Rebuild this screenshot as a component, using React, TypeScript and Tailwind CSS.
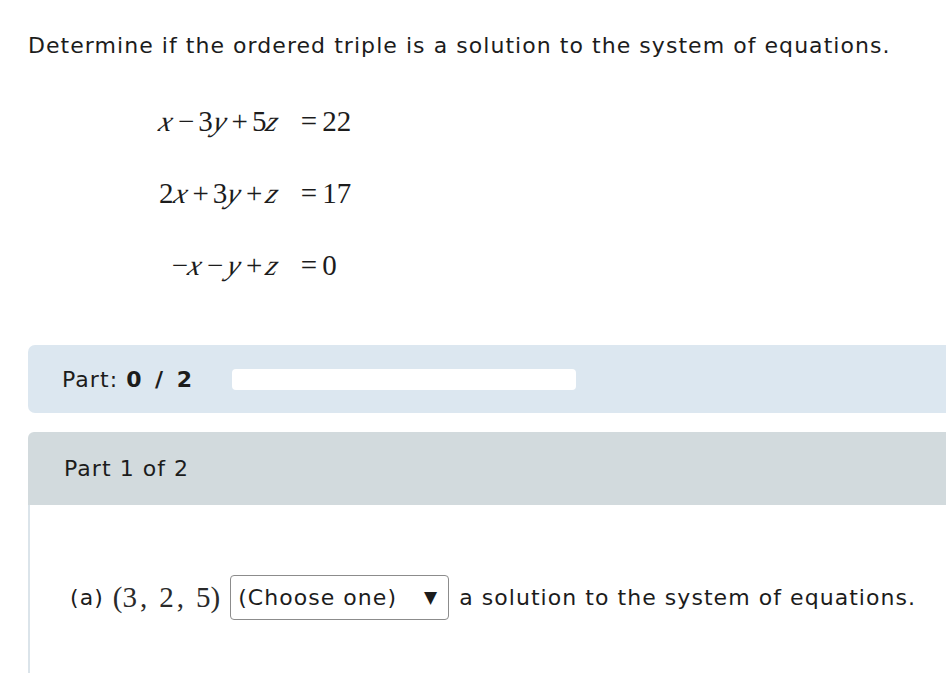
const sans = { fontFamily: '"DejaVu Sans", Verdana, sans-serif' };
const serif = { fontFamily: '"Liberation Serif", "Times New Roman", serif' };

function MathLine({ left, right }: { left: React.ReactNode; right: string }) {
  return (
    <>
      <div className="text-right whitespace-nowrap">{left}</div>
      <div className="whitespace-nowrap pl-[21px]">
        =<span className="ml-[5px]">{right}</span>
      </div>
    </>
  );
}

function V({ children }: { children: React.ReactNode }) {
  return <span className="inline-block -skew-x-[14deg] italic px-[1px]">{children}</span>;
}

function Op({ children }: { children: React.ReactNode }) {
  return <span className="px-[4px]">{children}</span>;
}

export default function App() {
  return (
    <div
      className="h-[673px] w-[946px] overflow-hidden bg-white text-[#1c1c1c] tracking-[1.05px]"
      style={sans}
    >
      <div className="pl-[28px] pt-[32px]">
        <p className="text-[22px] leading-[28px] whitespace-nowrap">
          Determine if the ordered triple is a solution to the system of equations.
        </p>

        <div
          className="mt-[44px] ml-[131px] grid w-max grid-cols-[auto_auto] gap-y-[38px] text-[29px] leading-[34px] tracking-normal"
          style={serif}
        >
          <MathLine
            left={
              <>
                <V>x</V>
                <Op>−</Op>3<V>y</V>
                <Op>+</Op>5<V>z</V>
              </>
            }
            right="22"
          />
          <MathLine
            left={
              <>
                2<V>x</V>
                <Op>+</Op>3<V>y</V>
                <Op>+</Op>
                <V>z</V>
              </>
            }
            right="17"
          />
          <MathLine
            left={
              <>
                −<V>x</V>
                <Op>−</Op>
                <V>y</V>
                <Op>+</Op>
                <V>z</V>
              </>
            }
            right="0"
          />
        </div>

        <div className="mt-[63px] flex h-[68px] w-[940px] items-center rounded-[7px] bg-[#dce7f0] pl-[34px]">
          <span className="text-[22px] whitespace-nowrap">
            Part: <span className="font-bold tracking-[3px]">0 / 2</span>
          </span>
          <div className="ml-[37px] h-[21px] w-[344px] rounded-[4px] bg-white" />
        </div>

        <div className="mt-[19px] w-[940px] rounded-t-[6px] bg-[#d2dadd]">
          <div className="flex h-[73px] items-center pl-[36px] text-[22px]">Part 1 of 2</div>
        </div>
        <div className="h-[200px] w-[940px] border-l-2 border-[#dbe4ea] pt-[70px] pl-[40px]">
          <div className="flex items-center text-[22px] whitespace-nowrap">
            <span>(a)</span>
            <span className="ml-[9px] text-[29px] tracking-normal text-[#2a2a2a]" style={serif}>
              (3<span className="pl-[3px] pr-[12px]">,</span>2<span className="pl-[3px] pr-[12px]">,</span>5)
            </span>
            <div className="ml-[10px] flex h-[45px] w-[219px] items-center justify-between rounded-[4px] border border-[#8c8c8c] pl-[7px] pr-[11px]">
              <span>(Choose one)</span>
              <span className="text-[17px] tracking-normal">▼</span>
            </div>
            <span className="ml-[10px]">a solution to the system of equations.</span>
          </div>
        </div>
      </div>
    </div>
  );
}
